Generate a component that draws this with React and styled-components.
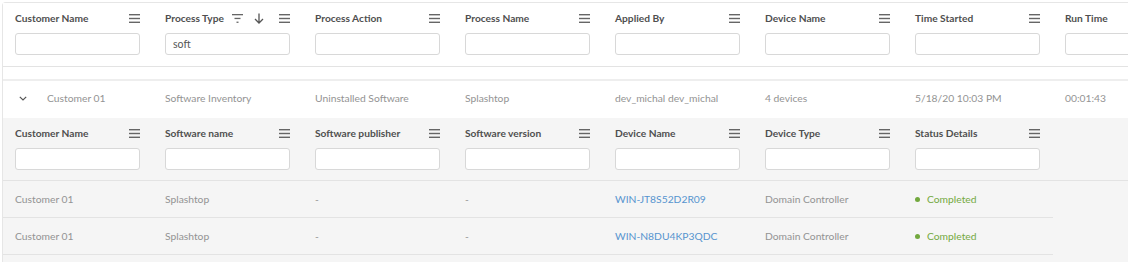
import React from "react";
import styled, { createGlobalStyle } from "styled-components";

const Global = createGlobalStyle`
  html, body { margin: 0; padding: 0; background: #ffffff; }
  body { font-family: Lato, "Noto Sans", sans-serif; overflow: hidden; }
  * { box-sizing: border-box; }
`;

const COL = 150;

const Grid = styled.div`
  margin: 2px 0 0 2px;
  width: 1240px;
  border-left: 1px solid #e6e6e6;
  border-top: 1px solid #e6e6e6;
  border-top-left-radius: 4px;
  background: #fff;
`;

const HeaderRow = styled.div`
  display: flex;
  height: ${(p) => p.$h}px;
  background: ${(p) => (p.$sub ? "#f5f5f5" : "#ffffff")};
  border-bottom: 1px solid #e3e3e3;
`;

const HeaderCell = styled.div`
  width: ${COL}px;
  flex: none;
  padding: ${(p) => p.$pt}px 13px 0 12px;
  display: flex;
  flex-direction: column;
  gap: ${(p) => p.$gap}px;
`;

const TitleLine = styled.div`
  display: flex;
  align-items: center;
  height: 16px;
`;

const Title = styled.span`
  flex: 1;
  font-size: 10.2px;
  font-weight: 700;
  color: #4f4f4f;
  white-space: nowrap;
`;

const IconBox = styled.span`
  display: inline-flex;
  align-items: center;
  justify-content: center;
  margin-left: ${(p) => p.$ml || 0}px;
`;

const FilterInput = styled.input`
  width: 125px;
  height: 22px;
  border: 1px solid #d8d8d8;
  border-radius: 3px;
  background: #fff;
  font-family: inherit;
  font-size: 10.5px;
  color: #555;
  padding: 0 7px;
  outline: none;
`;

const Spacer = styled.div`
  height: 14px;
  border-bottom: 2px solid #eeeeee;
`;

const Row = styled.div`
  display: flex;
  align-items: center;
  height: ${(p) => p.$h}px;
  padding-bottom: ${(p) => p.$pb || 0}px;
  border-bottom: ${(p) => (p.$line ? "1px solid #e3e3e3" : "none")};
  width: ${(p) => (p.$w ? `${p.$w}px` : "auto")};
`;

const Cell = styled.div`
  width: ${COL}px;
  flex: none;
  padding-left: 12px;
  font-size: 10.3px;
  color: ${(p) => p.$color || "#939393"};
  white-space: nowrap;
  display: flex;
  align-items: center;
`;

const FirstCell = styled(Cell)`
  padding-left: 16px;
`;

const Chevron = styled.span`
  display: inline-flex;
  width: 28px;
`;

const SubTable = styled.div`
  background: #f5f5f5;
  padding-bottom: 12px;
`;

const Dot = styled.span`
  width: 5px;
  height: 5px;
  border-radius: 50%;
  background: #72a83e;
  margin-right: 7px;
`;

const MenuIcon = () => (
  <svg width="11" height="9" viewBox="0 0 11 9">
    <rect x="0" y="0" width="11" height="1.4" fill="#666" />
    <rect x="0" y="3.8" width="11" height="1.4" fill="#666" />
    <rect x="0" y="7.6" width="11" height="1.4" fill="#666" />
  </svg>
);

const FilterIcon = () => (
  <svg width="11" height="9" viewBox="0 0 11 9">
    <rect x="0" y="0" width="11" height="1.3" fill="#666" />
    <rect x="2.5" y="3.8" width="6" height="1.3" fill="#666" />
    <rect x="4.5" y="7.6" width="2" height="1.3" fill="#666" />
  </svg>
);

const ArrowDownIcon = () => (
  <svg width="10" height="11" viewBox="0 0 10 11">
    <path d="M5 0.5 V10 M1 6 L5 10 L9 6" stroke="#555" strokeWidth="1.3" fill="none" />
  </svg>
);

const ChevronIcon = () => (
  <svg width="8" height="5" viewBox="0 0 8 5">
    <path d="M0.8 0.8 L4 4 L7.2 0.8" stroke="#555" strokeWidth="1.2" fill="none" />
  </svg>
);

const mainCols = [
  { t: "Customer Name" },
  { t: "Process Type", sorted: true, value: "soft" },
  { t: "Process Action" },
  { t: "Process Name" },
  { t: "Applied By" },
  { t: "Device Name" },
  { t: "Time Started" },
  { t: "Run Time", noMenu: true },
];

const subCols = [
  "Customer Name",
  "Software name",
  "Software publisher",
  "Software version",
  "Device Name",
  "Device Type",
  "Status Details",
];

const subRows = [
  ["Customer 01", "Splashtop", "-", "-", "WIN-JT8S52D2R09", "Domain Controller", "Completed"],
  ["Customer 01", "Splashtop", "-", "-", "WIN-N8DU4KP3QDC", "Domain Controller", "Completed"],
];

function Header({ title, sorted, value, noMenu, pt, gap }) {
  return (
    <HeaderCell $pt={pt} $gap={gap}>
      <TitleLine>
        <Title>{title}</Title>
        {sorted && (
          <>
            <IconBox><FilterIcon /></IconBox>
            <IconBox $ml={11}><ArrowDownIcon /></IconBox>
            <IconBox $ml={15}><MenuIcon /></IconBox>
          </>
        )}
        {!sorted && !noMenu && <IconBox><MenuIcon /></IconBox>}
      </TitleLine>
      <FilterInput defaultValue={value || ""} />
    </HeaderCell>
  );
}

export default function App() {
  return (
    <>
      <Global />
      <Grid>
        <HeaderRow $h={64}>
          {mainCols.map((c) => (
            <Header key={c.t} title={c.t} sorted={c.sorted} value={c.value} noMenu={c.noMenu} pt={7} gap={7} />
          ))}
        </HeaderRow>
        <Spacer />
        <Row $h={37} $pb={3}>
          <FirstCell>
            <Chevron><ChevronIcon /></Chevron>
            Customer 01
          </FirstCell>
          <Cell>Software Inventory</Cell>
          <Cell>Uninstalled Software</Cell>
          <Cell>Splashtop</Cell>
          <Cell>dev_michal dev_michal</Cell>
          <Cell>4 devices</Cell>
          <Cell>5/18/20 10:03 PM</Cell>
          <Cell>00:01:43</Cell>
        </Row>
        <SubTable>
          <HeaderRow $h={63} $sub>
            {subCols.map((t) => (
              <Header key={t} title={t} pt={7} gap={7} />
            ))}
          </HeaderRow>
          {subRows.map((r, i) => (
            <Row key={i} $h={37} $line $w={1050}>
              {r.map((v, j) => (
                <Cell key={j} $color={j === 4 ? "#5694cf" : j === 6 ? "#74a941" : undefined}>
                  {j === 6 && <Dot />}
                  {v}
                </Cell>
              ))}
            </Row>
          ))}
        </SubTable>
      </Grid>
    </>
  );
}
